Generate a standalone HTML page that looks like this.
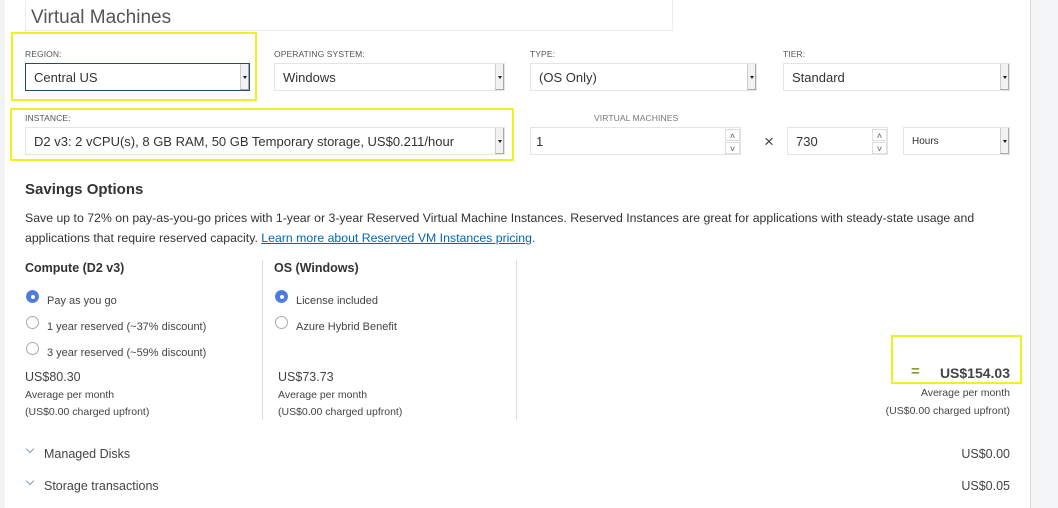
<!DOCTYPE html>
<html><head><style>
*{margin:0;padding:0;box-sizing:border-box}
body{width:1058px;height:508px;overflow:hidden;background:#fff;font-family:"Liberation Sans",sans-serif;color:#333;position:relative}
.a{position:absolute;white-space:nowrap}
.lbl{font-size:8.5px;color:#555;letter-spacing:.1px}
.sel{position:absolute;border:1px solid #e4e4e4;background:#fff;font-size:13px;color:#333;padding-left:8px;line-height:28px}
.sel .ar{position:absolute;right:0;top:0;bottom:0;width:9px;border-left:1px solid #ccc;border-right:1px solid #aaa;border-bottom:1px solid #aaa;background:#f2f2f2}
.sel .ar:after{content:"";position:absolute;left:2px;top:12px;border-left:2.5px solid transparent;border-right:2.5px solid transparent;border-top:3px solid #222}
.yb{position:absolute;border:2px solid #f0f020}
.spin{position:absolute;right:0;top:1px;bottom:1px;width:15px;font-size:9px;color:#555;text-align:center}
.spin div{height:12px;line-height:12px;border:1px solid #ddd;margin-bottom:1px}
.r{position:absolute;width:13px;height:13px;border-radius:50%;border:1px solid #aaa;background:#fff}
.r.on{border:1px solid #5b86d6;background:#4a7be0}
.r.on:after{content:"";position:absolute;left:3.5px;top:3.5px;width:4px;height:4px;border-radius:50%;background:#fff}
.s{font-size:11px;color:#444}
.h{font-size:12.5px;font-weight:bold;color:#333}
.chev{position:absolute;width:6px;height:6px;border-right:1px solid #7a9ec0;border-bottom:1px solid #7a9ec0;transform:rotate(45deg)}
</style></head><body>
<div class="a" style="left:0;top:0;width:5px;height:508px;background:#f2f3f4"></div>
<div class="a" style="left:1030px;top:0;width:28px;height:508px;background:#f4f5f6;border-left:1px solid #dcdcdc"></div>
<div class="a" style="left:25px;top:0;width:648px;height:31px;border:1px solid #ececec;border-top:none"></div>
<div class="a" style="left:31px;top:7px;font-size:19px;color:#555">Virtual Machines</div>

<div class="yb" style="left:11px;top:32px;width:246px;height:69px"></div>
<div class="a lbl" style="left:25px;top:49px">REGION:</div>
<div class="sel" style="left:25px;top:63px;width:225px;height:28px;border:1px solid #1f4f6e">Central US<div class="ar"></div></div>
<div class="a lbl" style="left:274px;top:49px">OPERATING SYSTEM:</div>
<div class="sel" style="left:274px;top:63px;width:231px;height:28px">Windows<div class="ar"></div></div>
<div class="a lbl" style="left:530px;top:49px">TYPE:</div>
<div class="sel" style="left:530px;top:63px;width:227px;height:28px">(OS Only)<div class="ar"></div></div>
<div class="a lbl" style="left:783px;top:49px">TIER:</div>
<div class="sel" style="left:783px;top:63px;width:227px;height:28px">Standard<div class="ar"></div></div>

<div class="yb" style="left:10px;top:108px;width:504px;height:53px"></div>
<div class="a lbl" style="left:25px;top:113px">INSTANCE:</div>
<div class="sel" style="left:25px;top:127px;width:480px;height:28px">D2 v3: 2 vCPU(s), 8 GB RAM, 50 GB Temporary storage, US$0.211/hour<div class="ar"></div></div>
<div class="a lbl" style="left:594px;top:113px;color:#777">VIRTUAL MACHINES</div>
<div class="sel" style="left:530px;top:127px;width:211px;height:28px;padding-left:5px">1<div class="spin"><div>˄</div><div>˅</div></div></div>
<div class="a" style="left:764px;top:132px;font-size:17px;color:#444">×</div>
<div class="sel" style="left:787px;top:127px;width:101px;height:28px">730<div class="spin"><div>˄</div><div>˅</div></div></div>
<div class="sel" style="left:903px;top:127px;width:107px;height:28px;font-size:10px">Hours<div class="ar"></div></div>

<div class="a" style="left:25px;top:181px;font-size:15px;font-weight:bold;color:#333">Savings Options</div>
<div class="a" style="left:25px;top:208px;font-size:12.3px;line-height:20px;color:#333">Save up to 72% on pay-as-you-go prices with 1-year or 3-year Reserved Virtual Machine Instances. Reserved Instances are great for applications with steady-state usage and<br>applications that require reserved capacity. <span style="color:#0067b8;text-decoration:underline">Learn more about Reserved VM Instances pricing</span>.</div>

<div class="a" style="left:262px;top:260px;width:1px;height:160px;background:#ddd"></div>
<div class="a" style="left:516px;top:260px;width:1px;height:160px;background:#ddd"></div>

<div class="a h" style="left:25px;top:261px">Compute (D2 v3)</div>
<div class="r on" style="left:26px;top:290px"></div><div class="a s" style="left:47px;top:295px">Pay as you go</div>
<div class="r" style="left:26px;top:316px"></div><div class="a s" style="left:47px;top:321px">1 year reserved (~37% discount)</div>
<div class="r" style="left:26px;top:342px"></div><div class="a s" style="left:47px;top:347px">3 year reserved (~59% discount)</div>
<div class="a" style="left:25px;top:370px;font-size:12.5px;color:#444">US$80.30</div>
<div class="a s" style="left:25px;top:389px;font-size:10.5px">Average per month</div>
<div class="a s" style="left:25px;top:406px;font-size:10.5px">(US$0.00 charged upfront)</div>

<div class="a h" style="left:274px;top:261px">OS (Windows)</div>
<div class="r on" style="left:275px;top:290px"></div><div class="a s" style="left:296px;top:295px">License included</div>
<div class="r" style="left:275px;top:316px"></div><div class="a s" style="left:296px;top:321px">Azure Hybrid Benefit</div>
<div class="a" style="left:278px;top:370px;font-size:12.5px;color:#444">US$73.73</div>
<div class="a s" style="left:278px;top:389px;font-size:10.5px">Average per month</div>
<div class="a s" style="left:278px;top:406px;font-size:10.5px">(US$0.00 charged upfront)</div>

<div class="yb" style="left:891px;top:335px;width:131px;height:49px"></div>
<div class="a" style="left:911px;top:363px;font-size:15px;font-weight:bold;color:#8a9a30">=</div>
<div class="a" style="right:48px;top:365px;font-size:14px;font-weight:bold;color:#444">US$154.03</div>
<div class="a s" style="right:48px;top:387px;font-size:10.5px">Average per month</div>
<div class="a s" style="right:48px;top:405px;font-size:10.5px">(US$0.00 charged upfront)</div>

<div class="chev" style="left:27px;top:446px"></div>
<div class="a" style="left:44px;top:447px;font-size:12.5px;color:#444">Managed Disks</div>
<div class="a" style="right:48px;top:447px;font-size:12.5px;color:#444">US$0.00</div>
<div class="chev" style="left:27px;top:478px"></div>
<div class="a" style="left:44px;top:479px;font-size:12.5px;color:#444">Storage transactions</div>
<div class="a" style="right:48px;top:479px;font-size:12.5px;color:#444">US$0.05</div>
</body></html>
